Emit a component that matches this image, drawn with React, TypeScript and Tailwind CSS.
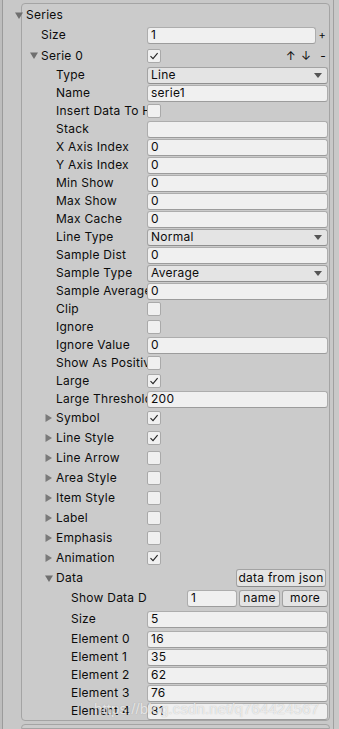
import React from "react"

const PAD = ["pl-[4px]", "pl-[19px]", "pl-[34px]", "pl-[49px]"]

const Tri = ({ open }: { open?: boolean }) => (
  <span className="w-[11px] -ml-[11px] flex items-center shrink-0">
    {open ? (
      <svg width="8" height="7" viewBox="0 0 8 7">
        <path d="M0 0.5 H8 L4 7 Z" fill="#6f6f6f" />
      </svg>
    ) : (
      <svg width="7" height="8" viewBox="0 0 7 8">
        <path d="M0.5 0 V8 L7 4 Z" fill="#7a7a7a" />
      </svg>
    )}
  </span>
)

const Check = ({ on }: { on?: boolean }) => (
  <div className="w-[14px] h-[14px] rounded-[2px] border border-[#a9a9a9] bg-[#f0f0f0] flex items-center justify-center">
    {on && (
      <svg width="10" height="10" viewBox="0 0 10 10">
        <path d="M1.5 5.2 L4 7.6 L8.6 2.2" stroke="#222" strokeWidth="1.1" fill="none" />
      </svg>
    )}
  </div>
)

const Field = ({ value = "" }: { value?: string }) => (
  <div className="h-[17px] w-full rounded-[3px] border border-[#adadad] border-b-[#9c9c9c] bg-[#f0f0f0] pl-[3px] flex items-center leading-none">
    {value}
  </div>
)

const Drop = ({ value }: { value: string }) => (
  <div className="h-[17px] w-full rounded-[3px] border border-[#a3a3a3] border-b-[#8f8f8f] bg-[#e4e4e4] pl-[3px] pr-[5px] flex items-center justify-between leading-none">
    <span>{value}</span>
    <svg width="8" height="5" viewBox="0 0 8 5">
      <path d="M0 0 H8 L4 5 Z" fill="#555" />
    </svg>
  </div>
)

const Btn = ({ children, className = "" }: { children: React.ReactNode; className?: string }) => (
  <div
    className={`h-[17px] rounded-[3px] border border-[#a3a3a3] border-b-[#8c8c8c] bg-[#e4e4e4] flex items-center justify-center leading-none ${className}`}
  >
    {children}
  </div>
)

type RowProps = {
  label: string
  level: number
  fold?: "open" | "closed"
  h?: string
  children?: React.ReactNode
}

const Row = ({ label, level, fold, h = "h-[18px]", children }: RowProps) => (
  <div className={`flex items-center ${h}`}>
    <div className={`w-[125px] shrink-0 flex items-center overflow-hidden whitespace-nowrap ${PAD[level]}`}>
      {fold && <Tri open={fold === "open"} />}
      <span>{label}</span>
    </div>
    <div className="w-[181px] flex items-center">{children}</div>
  </div>
)

export default function App() {
  const fields: [string, string, string][] = [
    ["Type", "drop", "Line"],
    ["Name", "field", "serie1"],
    ["Insert Data To Head", "check", ""],
    ["Stack", "field", ""],
    ["X Axis Index", "field", "0"],
    ["Y Axis Index", "field", "0"],
    ["Min Show", "field", "0"],
    ["Max Show", "field", "0"],
    ["Max Cache", "field", "0"],
    ["Line Type", "drop", "Normal"],
    ["Sample Dist", "field", "0"],
    ["Sample Type", "drop", "Average"],
    ["Sample Average", "field", "0"],
    ["Clip", "check", ""],
    ["Ignore", "check", ""],
    ["Ignore Value", "field", "0"],
    ["Show As Positive", "check", ""],
    ["Large", "check", "on"],
    ["Large Threshold", "field", "200"],
  ]

  const folds: [string, boolean][] = [
    ["Symbol", true],
    ["Line Style", true],
    ["Line Arrow", false],
    ["Area Style", false],
    ["Item Style", false],
    ["Label", false],
    ["Emphasis", false],
    ["Animation", true],
  ]

  const elements = ["16", "35", "62", "76", "81"]

  return (
    <div
      className="relative w-[339px] h-[729px] overflow-hidden bg-[#c8c8c8] text-[12px] tracking-[0.25px] text-[#0c0c0c] flex"
      style={{ fontFamily: "Inter, 'Noto Sans', sans-serif" }}
    >
      <div className="w-[3px] shrink-0 border-r border-[#9b9b9b] bg-[#bdbdbd]" />

      <div className="ml-[18px] w-[309px] shrink-0 flex flex-col">
        <div className="mt-[3px] h-[721px] rounded-[4px] border border-[#a4a4a4] bg-[#cbcbcb] flex flex-col pt-[1px]">
          <div className="flex items-center h-[20px] pl-[4px]">
            <Tri open />
            <span>Series</span>
          </div>

          <Row label="Size" level={1} h="h-[20px]">
            <div className="w-[169px]">
              <Field value="1" />
            </div>
            <span className="ml-auto mr-[2px] text-[11px]">+</span>
          </Row>

          <Row label="Serie 0" level={1} fold="open" h="h-[21px]">
            <Check on />
            <span className="ml-auto flex items-center gap-[5px] mr-[2px] text-[12px]">
              <span>↑</span>
              <span>↓</span>
              <span className="ml-[4px]">-</span>
            </span>
          </Row>

          {fields.map(([label, kind, val]) => (
            <Row key={label} label={label} level={2}>
              {kind === "drop" && <Drop value={val} />}
              {kind === "field" && <Field value={val} />}
              {kind === "check" && <Check on={val === "on"} />}
            </Row>
          ))}

          {folds.map(([label, on]) => (
            <Row key={label} label={label} level={2} fold="closed" h="h-[20px]">
              <Check on={on} />
            </Row>
          ))}

          <Row label="Data" level={2} fold="open" h="h-[20px]">
            <Btn className="ml-auto mr-[2px] w-[90px] h-[18px]">data from json</Btn>
          </Row>

          <Row label="Show Data Dimension" level={3} h="h-[20px]">
            <div className="ml-[40px] w-[50px]">
              <Field value="1" />
            </div>
            <Btn className="ml-[2px] w-[41px]">name</Btn>
            <Btn className="ml-[2px] w-[46px]">more</Btn>
          </Row>

          <Row label="Size" level={3} h="h-[22px]">
            <Field value="5" />
          </Row>

          {elements.map((v, i) => (
            <Row key={i} label={`Element ${i}`} level={3}>
              <Field value={v} />
            </Row>
          ))}
        </div>
        <div className="mt-[3px] h-[20px] rounded-t-[4px] border border-[#a4a4a4] bg-[#cbcbcb]" />
      </div>

      <div className="ml-[3px] w-[1px] bg-[#a0a0a0]" />

      <div
        className="absolute left-[94px] top-[701px] text-[15px] leading-none tracking-[0.1px] text-white/70 whitespace-nowrap"
        style={{ fontFamily: "'Liberation Sans', sans-serif", textShadow: "0 0 1px rgba(120,120,120,0.5)" }}
      >
        https://blog.csdn.net/q764424567
      </div>
    </div>
  )
}
